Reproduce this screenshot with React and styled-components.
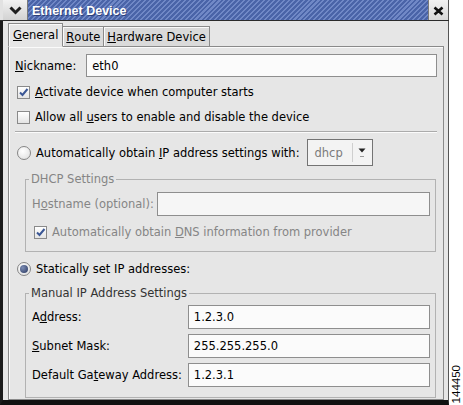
import React from "react";
import styled, { createGlobalStyle } from "styled-components";

const GlobalStyle = createGlobalStyle`
  html, body {
    margin: 0;
    padding: 0;
    background: #fff;
  }
  body {
    font-family: "DejaVu Sans", "Bitstream Vera Sans", sans-serif;
    font-size: 11.5px;
    line-height: 14px;
    color: #000;
  }
  * {
    box-sizing: border-box;
  }
`;

export default function App() {
  return (
    <Page>
      <GlobalStyle />
      <Window>
        <TitleBar>
          <MenuButton>
            <svg width="13" height="9" viewBox="0 0 13 9">
              <path d="M1.5 1.5 L6.5 6.5 L11.5 1.5" fill="none" stroke="#1e1e1e" strokeWidth="3" />
            </svg>
          </MenuButton>
          <Title>Ethernet Device</Title>
          <CloseButton>
            <svg width="11" height="10" viewBox="0 0 11 10">
              <path d="M1.5 1.5 L9.5 8.5 M9.5 1.5 L1.5 8.5" stroke="#111" strokeWidth="2.6" />
            </svg>
          </CloseButton>
        </TitleBar>

        <Frame>
          <TabRow>
            <Tab $active>
              <Mn>G</Mn>eneral
            </Tab>
            <Tab>
              <Mn>R</Mn>oute
            </Tab>
            <Tab>
              <Mn>H</Mn>ardware Device
            </Tab>
          </TabRow>

          <Panel>
            <FieldRow $gap={10} $height={23}>
              <Label>
                <Mn>N</Mn>ickname:
              </Label>
              <Entry defaultValue="eth0" />
            </FieldRow>

            <CheckRow $mt={6}>
              <CheckBox checked />
              <span>
                <Mn>A</Mn>ctivate device when computer starts
              </span>
            </CheckRow>
            <CheckRow $mt={7}>
              <CheckBox />
              <span>
                Allow all <Mn>u</Mn>sers to enable and disable the device
              </span>
            </CheckRow>

            <Separator />

            <ChoiceRow $mt={6} $height={27}>
              <Radio />
              <span>
                Automatically obtain <Mn>I</Mn>P address settings with:
              </span>
              <Combo>
                <ComboText>dhcp</ComboText>
                <ComboArrow>
                  <svg width="8" height="10" viewBox="0 0 8 10">
                    <path d="M0.5 0.5 H7.5 L4 4.5 Z" fill="#222" />
                    <path d="M2 8.5 H6" stroke="#999" strokeWidth="1" />
                  </svg>
                </ComboArrow>
              </Combo>
            </ChoiceRow>

            <Group $mt={6} $pt={6}>
              <GroupTitle $disabled>DHCP Settings</GroupTitle>
              <FieldRow $gap={3} $height={24}>
                <Label $disabled>
                  H<Mn>o</Mn>stname (optional):
                </Label>
                <Entry $disabled />
              </FieldRow>
              <CheckRow $mt={7} $disabled>
                <CheckBox checked />
                <span>
                  Automatically obtain <Mn>D</Mn>NS information from provider
                </span>
              </CheckRow>
            </Group>

            <ChoiceRow $mt={8} $height={18}>
              <Radio selected />
              <span>Statically set IP addresses:</span>
            </ChoiceRow>

            <Group $mt={8} $pt={5}>
              <GroupTitle>Manual IP Address Settings</GroupTitle>
              <AddressGrid>
                <Label>
                  A<Mn>d</Mn>dress:
                </Label>
                <Entry defaultValue="1.2.3.0" />
                <Label>
                  <Mn>S</Mn>ubnet Mask:
                </Label>
                <Entry defaultValue="255.255.255.0" />
                <Label>
                  Default Ga<Mn>t</Mn>eway Address:
                </Label>
                <Entry defaultValue="1.2.3.1" />
              </AddressGrid>
            </Group>
          </Panel>
        </Frame>
      </Window>
      <Margin>
        <FigureNumber>144450</FigureNumber>
      </Margin>
    </Page>
  );
}

function CheckBox({ checked }) {
  return (
    <Box>
      {checked && (
        <svg width="11" height="11" viewBox="0 0 11 11">
          <path d="M2 5.5 L4.5 8 L9.5 2" fill="none" stroke="#3b5795" strokeWidth="2" />
        </svg>
      )}
    </Box>
  );
}

function Radio({ selected }) {
  return <RadioCircle>{selected && <RadioDot />}</RadioCircle>;
}

const Page = styled.div`
  display: flex;
  width: 463px;
  height: 405px;
  overflow: hidden;
  background: #fff;
`;

const Window = styled.div`
  width: 449px;
  height: 405px;
  display: flex;
  flex-direction: column;
  background: #e6e6e6;
`;

const TitleBar = styled.div`
  display: flex;
  height: 21px;
  padding-left: 3px;
  border-bottom: 1px solid #2b2b2b;
  background: #e2e2e2;
`;

const MenuButton = styled.div`
  width: 25px;
  display: flex;
  align-items: center;
  justify-content: center;
  background: linear-gradient(#f2f2f2, #d2d2d2);
  border-right: 1px solid #7a7a7a;
`;

const Title = styled.div`
  flex: 1;
  display: flex;
  align-items: center;
  padding: 2px 0 0 4px;
  background: repeating-linear-gradient(135deg, #4a64a8 0 2px, #7088c6 2px 3.5px);
  color: #fff;
  font: bold 12.5px "Liberation Sans", Arial, sans-serif;
  text-shadow: 1px 1px 0 #2c3e78;
`;

const CloseButton = styled.div`
  width: 21px;
  display: flex;
  align-items: center;
  justify-content: center;
  padding-top: 2px;
  background: linear-gradient(#f2f2f2, #d8d8d8);
  border-left: 1px solid #7a7a7a;
  border-right: 1px solid #555;
`;

const Frame = styled.div`
  flex: 1;
  display: flex;
  flex-direction: column;
  padding: 3px 4px 0 5px;
  border-left: 3px solid #1b1b1b;
  border-right: 1px solid #555;
  border-bottom: 5px solid #111;
`;

const TabRow = styled.div`
  display: flex;
  align-items: flex-end;
  height: 23px;
  margin-bottom: -1px;
  position: relative;
  z-index: 1;
`;

const Tab = styled.div`
  display: flex;
  align-items: center;
  height: ${(p) => (p.$active ? 24 : 21)}px;
  padding: 0 ${(p) => (p.$active ? 4 : 3)}px;
  margin-right: -1px;
  background: ${(p) => (p.$active ? "#e6e6e6" : "#dadada")};
  border: 1px solid #8a8a8a;
  border-bottom: ${(p) => (p.$active ? "1px solid #e6e6e6" : "1px solid #8a8a8a")};
  box-shadow: inset 1px 1px 0 #fafafa;
  position: relative;
  z-index: ${(p) => (p.$active ? 2 : 1)};
`;

const Mn = styled.span`
  text-decoration: underline;
  text-underline-offset: 1px;
`;

const Panel = styled.div`
  flex: 1;
  display: flex;
  flex-direction: column;
  padding: 7px 6px 0 6px;
  border: 1px solid #8a8a8a;
  box-shadow: inset 1px 1px 0 #fafafa;
`;

const FieldRow = styled.div`
  display: flex;
  align-items: center;
  gap: ${(p) => p.$gap}px;
  height: ${(p) => p.$height}px;
`;

const Label = styled.span`
  white-space: nowrap;
  color: ${(p) => (p.$disabled ? "#858585" : "#000")};
`;

const Entry = styled.input`
  flex: 1;
  min-width: 0;
  height: 100%;
  padding: 0 5px;
  border: 1px solid #8e8e8e;
  border-radius: 0;
  background: ${(p) => (p.$disabled ? "#f6f6f6" : "#fbfbfb")};
  font: inherit;
  color: #000;
  outline: none;
`;

const CheckRow = styled.div`
  display: flex;
  align-items: center;
  gap: 5px;
  height: 18px;
  margin-top: ${(p) => p.$mt}px;
  padding-left: 2px;
  white-space: nowrap;
  color: ${(p) => (p.$disabled ? "#858585" : "#000")};
`;

const Box = styled.span`
  width: 13px;
  height: 13px;
  flex: none;
  display: flex;
  align-items: center;
  justify-content: center;
  border: 1px solid #8a8a8a;
  background: linear-gradient(#ffffff, #e4e4e4);
`;

const Separator = styled.div`
  margin-top: 5px;
  border-top: 1px solid #ababab;
  border-bottom: 1px solid #fbfbfb;
`;

const ChoiceRow = styled.div`
  display: flex;
  align-items: center;
  height: ${(p) => p.$height}px;
  margin-top: ${(p) => p.$mt}px;
  padding-left: 2px;
  white-space: nowrap;
  gap: 5px;
`;

const RadioCircle = styled.span`
  width: 14px;
  height: 14px;
  flex: none;
  display: flex;
  align-items: center;
  justify-content: center;
  border: 1px solid #858585;
  border-radius: 50%;
  background: radial-gradient(circle at 40% 35%, #ffffff, #dcdcdc);
`;

const RadioDot = styled.span`
  width: 8px;
  height: 8px;
  border-radius: 50%;
  background: radial-gradient(circle at 35% 35%, #7d8db5, #27365e);
`;

const Combo = styled.div`
  display: flex;
  align-items: stretch;
  width: 66px;
  height: 27px;
  margin-left: 2px;
  border: 1px solid #747474;
  background: #f3f3f3;
`;

const ComboText = styled.span`
  flex: 1;
  display: flex;
  align-items: center;
  padding-left: 7px;
  color: #7a7a7a;
  border-right: 1px solid #cfcfcf;
  margin: 3px 0;
`;

const ComboArrow = styled.span`
  width: 19px;
  display: flex;
  align-items: center;
  justify-content: center;
`;

const Group = styled.fieldset`
  margin: ${(p) => p.$mt}px 1px 0 10px;
  padding: ${(p) => p.$pt}px 5px 10px 6px;
  min-width: 0;
  border: 1px solid #b2b2b2;
`;

const GroupTitle = styled.legend`
  padding: 0 2px;
  margin-left: -3px;
  line-height: 14px;
  color: ${(p) => (p.$disabled ? "#858585" : "#333")};
`;

const AddressGrid = styled.div`
  display: grid;
  grid-template-columns: auto 1fr;
  grid-auto-rows: 24px;
  column-gap: 6px;
  row-gap: 5px;
  align-items: center;
`;

const Margin = styled.div`
  flex: 1;
  display: flex;
  flex-direction: column;
  justify-content: flex-end;
  align-items: center;
  padding: 0 1px 2px 2px;
`;

const FigureNumber = styled.span`
  writing-mode: vertical-rl;
  transform: rotate(180deg);
  font: 11.5px "Liberation Sans", Arial, sans-serif;
  line-height: 11px;
  color: #000;
`;
